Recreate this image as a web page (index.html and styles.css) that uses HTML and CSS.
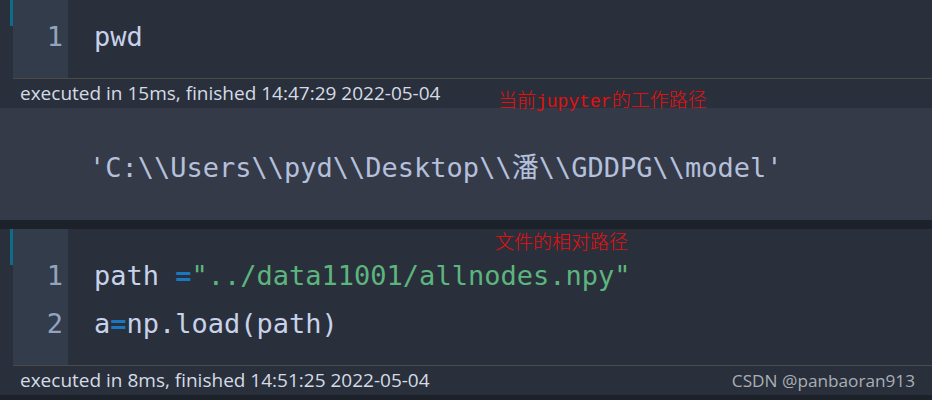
FILE: index.html
```html
<!DOCTYPE html>
<html lang="zh-CN">
<head>
    <meta charset="UTF-8">
    <title>Notebook</title>
    <link rel="stylesheet" href="styles.css">
</head>
<body>
    <div class="notebook">
        <!-- cell 1: pwd -->
        <div class="cell">
            <div class="input">
                <div class="marker"></div>
                <div class="gutter">
                    <div class="line">1</div>
                </div>
                <div class="code">
                    <div class="line">pwd</div>
                </div>
            </div>
            <div class="exec">executed in 15ms, finished 14:47:29 2022-05-04</div>
            <div class="output">'C:\\Users\\pyd\\Desktop\\潘\\GDDPG\\model'</div>
        </div>

        <!-- cell 2: load -->
        <div class="cell">
            <div class="input">
                <div class="marker"></div>
                <div class="gutter">
                    <div class="line">1</div>
                    <div class="line">2</div>
                </div>
                <div class="code">
                    <div class="line">path <span class="op">=</span><span class="str">"../data11001/allnodes.npy"</span></div>
                    <div class="line">a<span class="op">=</span>np.load(path)</div>
                </div>
            </div>
            <div class="exec">
                <span>executed in 8ms, finished 14:51:25 2022-05-04</span>
                <span class="watermark">CSDN @panbaoran913</span>
            </div>
        </div>
    </div>

    <div class="note note-cwd">当前<span class="latin">jupyter</span>的工作路径</div>
    <div class="note note-rel">文件的相对路径</div>
</body>
</html>
```

FILE: styles.css
```css
body {
    margin: 0;
    background-color: #1d222a;
    height: 400px;
    overflow: hidden;
    position: relative;
    font-family: "Open Sans", "Liberation Sans", sans-serif;
}
.notebook {
    margin-top: -10px;
}
.cell {
    background-color: #29303b;
    margin-bottom: 9px;
}
.input {
    display: flex;
    padding-left: 10px;
}
.marker {
    width: 3px;
    height: 36px;
    background-color: #0e6b8a;
}
.gutter {
    width: 55px;
    box-sizing: border-box;
    padding: 23px 5px 17px 0;
    background-color: #323c4a;
    color: #93a3c0;
    text-align: right;
    border-bottom: 1px solid #4a4b47;
}
.code {
    flex: 1;
    padding: 23px 0 17px 26px;
    color: #c8d2ea;
    border-bottom: 1px solid #4a4b47;
}
.line, .output {
    font-family: "DejaVu Sans Mono", "Noto Sans CJK SC", monospace;
    font-size: 27px;
    line-height: 48px;
    height: 48px;
    white-space: pre;
}
.op {
    color: #1a78c2;
    font-weight: bold;
}
.str {
    color: #5db57e;
}
.exec {
    display: flex;
    justify-content: space-between;
    height: 29px;
    padding: 0 17px 0 20px;
    font-size: 19px;
    line-height: 29px;
    color: #d5dbe6;
}
.watermark {
    font-size: 17.2px;
    color: #a9aeb6;
}
.output {
    background-color: #343a47;
    color: #b4c0dc;
    padding: 36px 0 28px 89px;
}
.note {
    position: absolute;
    color: #e60f0f;
    font-family: "Noto Sans CJK SC", sans-serif;
    font-size: 19px;
    line-height: 20px;
    font-weight: 300;
}
.note .latin {
    font-family: "Liberation Mono", monospace;
    font-size: 18px;
}
.note-cwd {
    left: 498px;
    top: 89px;
}
.note-rel {
    left: 495px;
    top: 231px;
}
```
